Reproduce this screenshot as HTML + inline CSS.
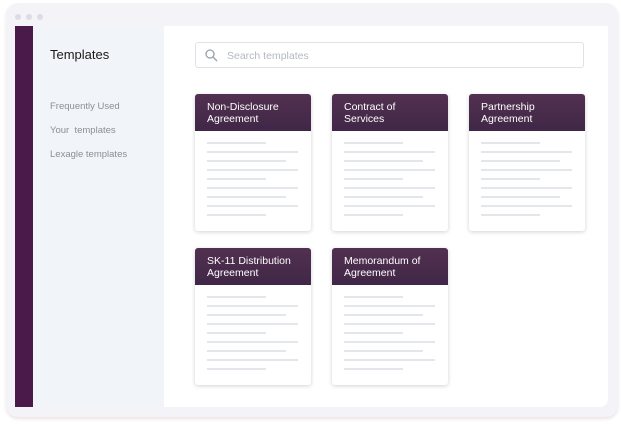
<!DOCTYPE html>
<html><head><style>
*{margin:0;padding:0;box-sizing:border-box}
body{width:621px;height:424px;background:#fff;font-family:"Liberation Sans",sans-serif;position:relative;overflow:hidden}
.frame{position:absolute;left:6px;top:3px;width:612px;height:414px;background:#f4f3f8;border-radius:12px;box-shadow:0 2px 3px rgba(200,170,190,.35)}
.dot{position:absolute;top:11px;width:6px;height:6px;border-radius:50%;background:#dcdce4}
.inner{position:absolute;left:15px;top:26px;width:593px;height:381px;background:#fff;border-radius:0 0 8px 0;overflow:hidden}
.bar{position:absolute;left:0;top:0;width:18px;height:100%;background:#4a1a4a}
.side{position:absolute;left:18px;top:0;width:131px;height:100%;background:#f1f4f8}
.side h1{position:absolute;left:17px;top:21px;font-size:13px;font-weight:normal;color:#1a1a1a}
.side p{position:absolute;left:17px;font-size:9.5px;color:#8a8f98}
.search{position:absolute;left:180px;top:16px;width:389px;height:26px;border:1px solid #dfe2e7;border-radius:3px}
.search span{position:absolute;left:31px;top:7px;font-size:10.5px;color:#b3b8c0}
.card{position:absolute;width:116px;height:137px;background:#fff;border-radius:3px;box-shadow:0 1px 4px rgba(0,0,0,.18);overflow:hidden}
.card .h{height:37px;background:linear-gradient(#523050,#402747);color:#fff;font-size:10.5px;line-height:12px;padding:7px 12px}
.l{position:absolute;left:12px;height:2px;background:#e3e6ea}
</style></head><body>
<div class="frame">
<div class="dot" style="left:9px"></div><div class="dot" style="left:20px"></div><div class="dot" style="left:31px"></div>
</div>
<div class="inner">
<div class="bar"></div>
<div class="side">
<h1>Templates</h1>
<p style="top:75px">Frequently Used</p>
<p style="top:99px">Your&nbsp; templates</p>
<p style="top:123px">Lexagle templates</p>
</div>
<div class="search">
<svg style="position:absolute;left:9px;top:6px" width="13" height="13" viewBox="0 0 13 13"><circle cx="5" cy="5" r="4" fill="none" stroke="#9aa0a8" stroke-width="1.3"/><path d="M8 8l4 4" stroke="#9aa0a8" stroke-width="1.3"/></svg>
<span>Search templates</span>
</div>
</div>
<div id="cards"></div>
<script>
const cs=[[195,94,"Non-Disclosure<br>Agreement"],[332,94,"Contract of<br>Services"],[469,94,"Partnership<br>Agreement"],[195,248,"SK-11 Distribution<br>Agreement"],[332,248,"Memorandum of<br>Agreement"]];
const w=[59,91,79,91,59,91,79,91,59];
let h="";
for(const [x,y,t] of cs){h+=`<div class="card" style="left:${x}px;top:${y}px"><div class="h">${t}</div>`;
w.forEach((ww,i)=>{h+=`<div class="l" style="top:${48+i*9}px;width:${ww}px"></div>`});h+="</div>";}
document.getElementById("cards").innerHTML=h;
</script>
</body></html>
